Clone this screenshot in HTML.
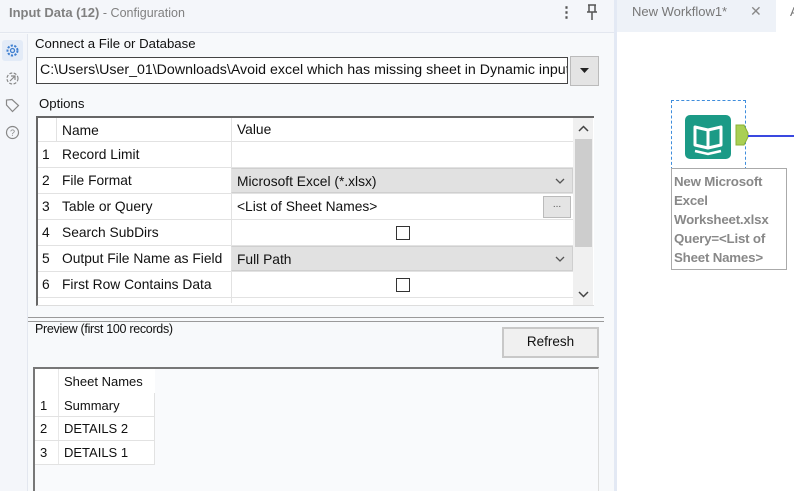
<!DOCTYPE html>
<html><head><meta charset="utf-8"><style>
*{box-sizing:border-box;margin:0;padding:0}
body{width:794px;height:491px;overflow:hidden;position:relative;background:#f7f9fb;font-family:"Liberation Sans",sans-serif;font-size:13px;color:#111}
.a{position:absolute}
.t{position:absolute;white-space:nowrap}
.row{position:absolute;left:38px;width:535px;height:26px;border-bottom:1px solid #e2e2e2;background:#fff;font-size:13.8px}
.row .n{position:absolute;left:4px;top:5px}
.row .nm{position:absolute;left:24px;top:5px}
.row .v{position:absolute;left:193px;top:0;width:342px;height:25px;border-left:1px solid #e2e2e2}
.sel{background:#e1e1e1;border:1px solid #cfcfcf}
.cb{position:absolute;left:164px;top:6px;width:14px;height:14px;border:1px solid #333;background:#fff}
.chev{position:absolute;right:7px;top:9px}
</style></head><body>
<!-- header -->
<div class="a" style="left:0;top:0;width:614px;height:33px;background:#f4f6fa;border-bottom:1px solid #e3e7ef"></div>
<div class="t" style="left:9px;top:5px;font-size:13px;color:#808080"><b>Input Data (12)</b> <span style="font-size:12.5px">- Configuration</span></div>
<div class="t" style="left:559px;top:3px;color:#555;font-size:15px;font-weight:bold">⋮</div>
<svg class="a" style="left:586px;top:4px" width="12" height="17" viewBox="0 0 12 17"><path d="M2 1h8M3 1v7M9 1v7M1 8h10M6 8v8" stroke="#555" stroke-width="1.5" fill="none"/></svg>
<!-- sidebar -->
<div class="a" style="left:0;top:34px;width:28px;height:457px;background:#f4f6fa;border-right:1px solid #e3e7ef"></div>
<div class="a" style="left:2px;top:40px;width:21px;height:21px;background:#e3ebf7;border-radius:3px"></div>
<svg class="a" style="left:5px;top:43px" width="15" height="15" viewBox="0 0 15 15"><circle cx="7.5" cy="7.5" r="5" fill="none" stroke="#3f7fd0" stroke-width="2" stroke-dasharray="2.2 1.4"/><circle cx="7.5" cy="7.5" r="2" fill="none" stroke="#3f7fd0" stroke-width="1.3"/></svg>
<svg class="a" style="left:5px;top:71px" width="15" height="15" viewBox="0 0 15 15"><circle cx="7.5" cy="7.5" r="5.5" fill="none" stroke="#888" stroke-width="1.2" stroke-dasharray="3 1.5"/><path d="M5 10l5-5M6 5h4v4" stroke="#888" fill="none" stroke-width="1.2"/></svg>
<svg class="a" style="left:5px;top:98px" width="15" height="15" viewBox="0 0 15 15"><path d="M1.5 2v5l6 6.5 6-6-6.5-6z" fill="none" stroke="#888" stroke-width="1.2"/></svg>
<svg class="a" style="left:5px;top:125px" width="15" height="15" viewBox="0 0 15 15"><circle cx="7.5" cy="7.5" r="6" fill="none" stroke="#888" stroke-width="1.2"/><text x="7.5" y="11" font-size="9" text-anchor="middle" fill="#888" font-family="Liberation Sans">?</text></svg>
<!-- connect -->
<div class="t" style="left:35px;top:36px;font-size:13.2px">Connect a File or Database</div>
<div class="a" style="left:36px;top:57px;width:532px;height:27px;background:#fff;border:1px solid #444;overflow:hidden"><div class="t" style="left:3px;top:4px;font-size:14.2px">C:\Users\User_01\Downloads\Avoid excel which has missing sheet in Dynamic input</div></div>
<div class="a" style="left:570px;top:56px;width:29px;height:30px;background:#e4e4e4;border:1px solid #bbb"></div>
<svg class="a" style="left:580px;top:68px" width="9" height="6"><path d="M0 0h9L4.5 5z" fill="#222"/></svg>
<div class="t" style="left:39px;top:96px;font-size:13.2px">Options</div>
<!-- grid -->
<div class="a" style="left:36px;top:116px;width:558px;height:190px;background:#fff;border-top:2px solid #666;border-left:2px solid #666;border-bottom:1px solid #ddd"></div>
<div class="row" style="top:118px;height:24px"><span class="nm">Name</span><div class="v" style="height:24px"><span class="t" style="left:5px;top:4px">Value</span></div></div>
<div class="a" style="left:38px;top:118px;width:19px;height:185px;border-right:1px solid #e2e2e2"></div>
<div class="row" style="top:142px"><span class="n">1</span><span class="nm">Record Limit</span><div class="v"></div></div>
<div class="row" style="top:168px"><span class="n">2</span><span class="nm">File Format</span><div class="v sel"><span class="t" style="left:5px;top:5px">Microsoft Excel (*.xlsx)</span><svg class="chev" width="10" height="6"><path d="M1 1l4 4 4-4" stroke="#555" fill="none" stroke-width="1.3"/></svg></div></div>
<div class="row" style="top:194px"><span class="n">3</span><span class="nm">Table or Query</span><div class="v"><span class="t" style="left:5px;top:5px">&lt;List of Sheet Names&gt;</span><div class="a" style="left:311px;top:2px;width:28px;height:22px;background:#e4e4e4;border:1px solid #bbb;color:#555;font-size:10px;text-align:center;line-height:16px">...</div></div></div>
<div class="row" style="top:220px"><span class="n">4</span><span class="nm">Search SubDirs</span><div class="v"><div class="cb"></div></div></div>
<div class="row" style="top:246px"><span class="n">5</span><span class="nm">Output File Name as Field</span><div class="v sel"><span class="t" style="left:5px;top:5px">Full Path</span><svg class="chev" width="10" height="6"><path d="M1 1l4 4 4-4" stroke="#555" fill="none" stroke-width="1.3"/></svg></div></div>
<div class="row" style="top:272px"><span class="n">6</span><span class="nm">First Row Contains Data</span><div class="v"><div class="cb"></div></div></div>
<div class="row" style="top:298px;height:5px;border:none"><div class="v" style="height:5px"></div></div>
<div class="a" style="left:573px;top:118px;width:20px;height:187px;background:#f0f0f0"></div>
<div class="a" style="left:575px;top:139px;width:17px;height:108px;background:#cdcdcd"></div>
<svg class="a" style="left:578px;top:125px" width="11" height="7"><path d="M1 6l4.5-4.5L10 6" stroke="#444" fill="none" stroke-width="1.5"/></svg>
<svg class="a" style="left:578px;top:291px" width="11" height="7"><path d="M1 1l4.5 4.5L10 1" stroke="#444" fill="none" stroke-width="1.5"/></svg>
<!-- separators -->
<div class="a" style="left:28px;top:317px;width:576px;height:1px;background:#9a9a9a"></div>
<div class="a" style="left:28px;top:321px;width:576px;height:1px;background:#9a9a9a"></div>
<div class="t" style="left:35px;top:322px;font-size:12.5px;letter-spacing:-0.3px">Preview (first 100 records)</div>
<div class="a" style="left:502px;top:327px;width:97px;height:31px;background:#f0f0f0;border:2px solid #c8c8c8;text-align:center;line-height:26px;font-size:13.5px">Refresh</div>
<!-- preview grid -->
<div class="a" style="left:33px;top:367px;width:566px;height:124px;background:#f9fafc;border-top:2px solid #777;border-left:2px solid #777;border-right:1px solid #ddd"></div>
<div class="a" style="left:35px;top:369px;width:120px;height:96px;background:#fff"></div>
<div class="a" style="left:35px;top:369px;width:24px;height:96px;border-right:1px solid #e8e8e8;background:#fff"></div>
<div class="t" style="left:64px;top:374px">Sheet Names</div>
<div class="a" style="left:35px;top:416px;width:120px;height:1px;background:#e2e2e2"></div>
<div class="a" style="left:35px;top:440px;width:120px;height:1px;background:#e2e2e2"></div>
<div class="a" style="left:35px;top:464px;width:120px;height:1px;background:#e2e2e2"></div>
<div class="a" style="left:154px;top:393px;width:1px;height:72px;background:#e2e2e2"></div>
<div class="t" style="left:40px;top:398px">1</div><div class="t" style="left:64px;top:398px">Summary</div>
<div class="t" style="left:40px;top:421px">2</div><div class="t" style="left:64px;top:421px">DETAILS 2</div>
<div class="t" style="left:40px;top:445px">3</div><div class="t" style="left:64px;top:445px">DETAILS 1</div>
<!-- divider -->
<div class="a" style="left:614px;top:0;width:3px;height:491px;background:#e3e9f4"></div>
<!-- canvas -->
<div class="a" style="left:617px;top:0;width:177px;height:491px;background:#fff"></div>
<div class="a" style="left:617px;top:0;width:159px;height:32px;background:#eef2f8"></div>
<div class="t" style="left:632px;top:4px;color:#777;font-size:13px">New Workflow1*</div>
<div class="t" style="left:750px;top:3px;color:#888;font-size:14px">✕</div>
<div class="t" style="left:790px;top:4px;color:#777">A</div>
<div class="a" style="left:671px;top:100px;width:75px;height:70px;border:1px dashed #3f8ddc"></div>
<div class="a" style="left:685px;top:115px;width:46px;height:44px;background:#1b9a86;border-radius:5px"></div>
<svg class="a" style="left:685px;top:115px" width="46" height="44" viewBox="0 0 46 44"><path d="M10 12v18l13 3 13-3V12l-13 3z M23 15v18" fill="none" stroke="#fff" stroke-width="3" stroke-linejoin="round"/><path d="M10 36l13 3 13-3" fill="none" stroke="#fff" stroke-width="2.5"/></svg>
<svg class="a" style="left:735px;top:124px" width="59" height="24"><path d="M1 1h8l4 8v4l-4 8H1z" fill="#a9cf54" stroke="#8ab034"/><line x1="13" y1="12" x2="59" y2="12" stroke="#3a48e0" stroke-width="2"/></svg>
<div class="a" style="left:671px;top:168px;width:116px;height:102px;border:1px solid #aaa;background:#fff"></div>
<div class="t" style="left:674px;top:172px;color:#888;font-weight:bold;font-size:13.3px;line-height:19px;letter-spacing:-0.2px">New Microsoft<br>Excel<br>Worksheet.xlsx<br>Query=&lt;List of<br>Sheet Names&gt;</div>
</body></html>
